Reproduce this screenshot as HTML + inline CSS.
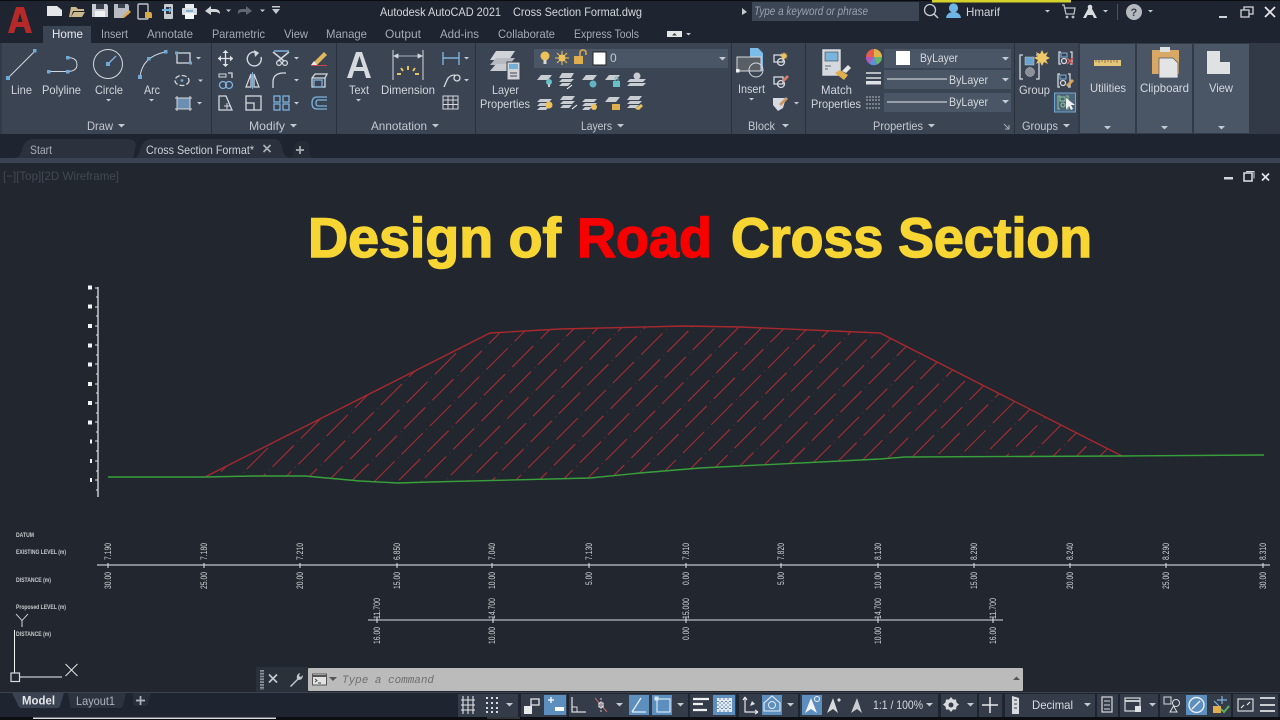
<!DOCTYPE html>
<html><head><meta charset="utf-8"><title>AutoCAD</title>
<style>
html,body{margin:0;padding:0;background:#22272f;width:1280px;height:720px;overflow:hidden}
svg{display:block}
text{font-family:"Liberation Sans",sans-serif;font-size:12px;fill:#d3d7dc}
.tab{fill:#a3abb6;font-size:12px}
.rl{fill:#d2d6db;font-size:12px}
.pt{fill:#c3c8cf;font-size:12px}
.lv{font-size:9px;fill:#d0d3d6}
.lb{font-size:6px;fill:#c8cbcf;font-weight:bold}
.ic{fill:none;stroke:#d5d9de;stroke-width:1.3}
.blue{fill:none;stroke:#7fb2dc;stroke-width:1.3}
</style></head><body>
<svg width="1280" height="720" viewBox="0 0 1280 720" xmlns="http://www.w3.org/2000/svg">
<defs>
<polygon id="d" points="0,0 7,0 3.5,3.5" fill="#c5cad1"/>
<polygon id="e" points="0,0 5,0 2.5,2.5" fill="#c5cad1"/>
<pattern id="h" width="40" height="33" patternUnits="userSpaceOnUse" patternTransform="rotate(-45 205 477)">
<line x1="0" y1="6" x2="30" y2="6" stroke="#b02c30" stroke-width="1.1"/>
<line x1="35" y1="6" x2="36" y2="6" stroke="#6c3038" stroke-width="1"/>
<line x1="20" y1="22.5" x2="40" y2="22.5" stroke="#b02c30" stroke-width="1.1"/>
<line x1="0" y1="22.5" x2="10" y2="22.5" stroke="#b02c30" stroke-width="1.1"/>
<line x1="15" y1="22.5" x2="16" y2="22.5" stroke="#6c3038" stroke-width="1"/>
</pattern>
</defs>

<!-- base -->
<rect width="1280" height="720" fill="#22272f"/>
<rect width="1280" height="43" fill="#1f2530"/>
<rect y="0" width="1280" height="1" fill="#0a0c10"/>
<!-- ribbon -->
<rect x="0" y="43" width="1280" height="91" fill="#323a47"/>
<rect x="2" y="43" width="1076" height="91" fill="#3a4453"/>
<rect x="43" y="26" width="48" height="17" fill="#3a4453"/>
<g fill="#2a313c">
<rect x="211" y="43" width="1" height="91"/><rect x="336" y="43" width="1" height="91"/><rect x="475" y="43" width="1" height="91"/>
<rect x="731" y="43" width="1" height="91"/><rect x="805" y="43" width="1" height="91"/><rect x="1014" y="43" width="1" height="91"/>
</g>
<rect x="1080" y="44" width="55" height="89" fill="#4a5566"/>
<rect x="1137" y="44" width="55" height="89" fill="#4a5566"/>
<rect x="1194" y="44" width="55" height="89" fill="#4a5566"/>

<!-- A logo -->
<path d="M8 33 L16 7 L24 7 L32 33 L26 33 L24 27 L16 27 L14 33 Z M17.500 22 L22.500 22 L20 13 Z" fill="#b52a28" fill-rule="evenodd"/>

<!-- QAT -->
<path d="M47 6h10l5 4v6h-15z" fill="#e4e6e8"/>
<path d="M69 17l2-10h5l2 2h6v2h-11l-2 6z M71 17l3-5h11l-3 5z" fill="#c9b98d"/>
<path d="M92 4h15l1 2v11h-16z" fill="#c8ccd1"/><rect x="96" y="4" width="8" height="5" fill="#39414e"/><rect x="95" y="11" width="10" height="6" fill="#eef0f2"/>
<path d="M114 4h14l1 2v8l-6 4h-9z" fill="#b8bcc2"/><rect x="118" y="4" width="7" height="4" fill="#39414e"/><path d="M122 17l7-7 2 2-7 6z" fill="#e0a84a"/>
<rect x="138" y="4" width="10" height="15" rx="1" fill="none" stroke="#bfc3c9" stroke-width="1.4"/><path d="M145 12h6l1 2v4h-7z" fill="#d9a948"/>
<rect x="164" y="4" width="9" height="15" rx="1" fill="#c7cbd0"/><rect x="166" y="7" width="5" height="7" fill="#2f3744"/><path d="M162 9h7v-2l3 3-3 3v-2h-7z" fill="#6eb6e0"/>
<rect x="185" y="4" width="9" height="5" fill="#e8eaec"/><rect x="182" y="8" width="15" height="7" rx="1" fill="#d7dade"/><rect x="185" y="13" width="9" height="6" fill="#f4f5f6"/><rect x="186" y="10" width="7" height="2" fill="#7eb2d6"/>
<path d="M205 11l6-5v3h4q5 0 5 5q-2-2-5-2h-4v3z" fill="#d2d6db"/>
<use href="#e" x="226" y="9.5"/>
<path d="M252 11l-6-5v3h-4q-5 0-4 5q2-2 4-2h4v3z" fill="#5f6773"/>
<use href="#e" x="260" y="9.5"/>
<rect x="272" y="6" width="8" height="1.5" fill="#c5cad1"/><polygon points="272,9 280,9 276,14" fill="#c5cad1"/>

<text x="380" y="16" textLength="121" lengthAdjust="spacingAndGlyphs">Autodesk AutoCAD 2021</text>
<text x="513" y="16" textLength="129" lengthAdjust="spacingAndGlyphs">Cross Section Format.dwg</text>

<polygon points="742,8 747,12 742,15" fill="#c5cad1"/>
<rect x="752" y="2" width="167" height="19" fill="#3c4655"/>
<text x="754" y="15" textLength="114" lengthAdjust="spacingAndGlyphs" style="font-style:italic;font-size:12px;fill:#98a1ae">Type a keyword or phrase</text>
<circle cx="930" cy="10" r="5.5" fill="none" stroke="#c7cbd0" stroke-width="1.3"/><line x1="934" y1="14" x2="938" y2="18" stroke="#c7cbd0" stroke-width="1.5"/>
<circle cx="953.5" cy="8" r="4.6" fill="#6fb4e6"/><path d="M946 18q1-6 7.500-6t7.500 6z" fill="#6fb4e6"/>
<text x="966" y="16" textLength="34" lengthAdjust="spacingAndGlyphs">Hmarif</text>
<use href="#e" x="1045" y="10"/>
<path d="M1062 5h2l2 9h8l1-6h-10" fill="none" stroke="#b9bec5" stroke-width="1.3"/><circle cx="1067" cy="17" r="1.4" fill="#b9bec5"/><circle cx="1073" cy="17" r="1.4" fill="#b9bec5"/>
<path d="M1083 18l7-13 7 13-3 0-1.500-3h-5l-1.500 3z" fill="#d8dbdf"/><circle cx="1090" cy="7" r="2.300" fill="#d8dbdf"/>
<use href="#e" x="1103" y="10"/>
<rect x="1117" y="4" width="1" height="16" fill="#4b5360"/>
<circle cx="1134" cy="12" r="8" fill="#b5b9bf"/><text x="1130.500" y="16" style="font-size:11px;font-weight:bold;fill:#3a414c">?</text>
<use href="#e" x="1148" y="10"/>
<rect x="932" y="0" width="139" height="2.500" fill="#d6d22c"/>
<rect x="1219" y="16" width="8" height="2" fill="#d0d3d8"/>
<rect x="1244" y="7" width="9" height="7" fill="none" stroke="#d0d3d8" stroke-width="1.300"/><rect x="1241" y="10" width="8" height="7" fill="#1f2530" stroke="#d0d3d8" stroke-width="1.300"/>
<path d="M1265 7l10 10M1275 7l-10 10" stroke="#e2e4e7" stroke-width="1.800"/>

<!-- tabs -->
<text x="52" y="38" textLength="31" lengthAdjust="spacingAndGlyphs" style="fill:#e8eaed">Home</text>
<text class="tab" x="101" y="38" textLength="27" lengthAdjust="spacingAndGlyphs">Insert</text>
<text class="tab" x="147" y="38" textLength="46" lengthAdjust="spacingAndGlyphs">Annotate</text>
<text class="tab" x="212" y="38" textLength="53" lengthAdjust="spacingAndGlyphs">Parametric</text>
<text class="tab" x="284" y="38" textLength="24" lengthAdjust="spacingAndGlyphs">View</text>
<text class="tab" x="326" y="38" textLength="41" lengthAdjust="spacingAndGlyphs">Manage</text>
<text class="tab" x="385" y="38" textLength="36" lengthAdjust="spacingAndGlyphs">Output</text>
<text class="tab" x="440" y="38" textLength="39" lengthAdjust="spacingAndGlyphs">Add-ins</text>
<text class="tab" x="498" y="38" textLength="57" lengthAdjust="spacingAndGlyphs">Collaborate</text>
<text class="tab" x="574" y="38" textLength="65" lengthAdjust="spacingAndGlyphs">Express Tools</text>
<rect x="667" y="31" width="15" height="6" fill="#e4e6e8"/><polygon points="672,35.500 677,35.500 674.500,33" fill="#444"/>
<use href="#e" x="686" y="33"/>

<!-- Draw -->
<line x1="8" y1="78" x2="35" y2="51" stroke="#d5d9de" stroke-width="1"/><rect x="6" y="76" width="4" height="4" fill="#6fa9d6"/><rect x="33" y="49" width="3.500" height="3.500" fill="#6fa9d6"/>
<path d="M48 71.500h19M67 57.500q10 0 10 7t-10 7" fill="none" stroke="#d5d9de" stroke-width="1"/><rect x="47" y="70" width="3.500" height="3.500" fill="#6fa9d6"/><rect x="66" y="70" width="3.500" height="3.500" fill="#6fa9d6"/><rect x="66" y="56" width="3.500" height="3.500" fill="#6fa9d6"/>
<circle cx="108" cy="64" r="14.500" fill="none" stroke="#d5d9de" stroke-width="1"/><line x1="108" y1="64" x2="116" y2="56" stroke="#7fb2dc" stroke-width="1.300"/><rect x="106" y="62" width="4" height="4" fill="#6fa9d6"/>
<path d="M140 77q2-20 25-25" fill="none" stroke="#d5d9de" stroke-width="1"/><rect x="138" y="75" width="4" height="4" fill="#6fa9d6"/><rect x="147" y="57" width="3.500" height="3.500" fill="#6fa9d6"/><rect x="164" y="50" width="3.500" height="3.500" fill="#6fa9d6"/>
<rect x="177" y="53" width="13" height="10" class="ic"/><rect x="175" y="51.500" width="3" height="3" fill="#6fa9d6"/><rect x="189" y="61.500" width="3" height="3" fill="#6fa9d6"/>
<use href="#e" x="196" y="57"/>
<ellipse cx="182" cy="80.500" rx="7" ry="5" class="ic" stroke-dasharray="5 2"/><circle cx="182" cy="80.500" r="1.400" fill="#6fa9d6"/>
<use href="#e" x="198" y="79.500"/>
<rect x="177" y="98" width="13" height="11" fill="#6d8eb3" stroke="#d5d9de" stroke-width="1"/><path d="M175 98h17M175 109h17M177 96v15M190 96v15" stroke="#d5d9de" stroke-width="1"/>
<use href="#e" x="197" y="102"/>
<text class="rl" x="11" y="94" textLength="21" lengthAdjust="spacingAndGlyphs">Line</text>
<text class="rl" x="42" y="94" textLength="39" lengthAdjust="spacingAndGlyphs">Polyline</text>
<text class="rl" x="95" y="94" textLength="28" lengthAdjust="spacingAndGlyphs">Circle</text>
<text class="rl" x="144" y="94" textLength="16" lengthAdjust="spacingAndGlyphs">Arc</text>
<use href="#e" x="106" y="99"/><use href="#e" x="149" y="99"/>
<text class="pt" x="87" y="130" textLength="26" lengthAdjust="spacingAndGlyphs">Draw</text><use href="#d" x="118" y="124"/>

<!-- Modify -->
<path d="M218 58.500h15M225.500 51v15" stroke="#e0e3e6" stroke-width="1.300"/><path d="M225.500 50l-3 3h6zM225.500 67l-3-3h6zM218 58.500l3-3v6zM233 58.500l-3-3v6z" fill="#e0e3e6"/>
<path d="M258 53a7 7 0 1 0 3 4" fill="none" stroke="#d5d9de" stroke-width="1.400"/><path d="M254 50l5 3-4 4z" fill="#d5d9de"/>
<path d="M273 52l11 9M289 52l-11 9" stroke="#d5d9de" stroke-width="1.500"/><path d="M274 51h15" stroke="#7fb2dc" stroke-width="1.500"/><circle cx="279" cy="63" r="2.400" class="ic"/><circle cx="285" cy="63" r="2.400" class="ic"/>
<use href="#e" x="294" y="57"/>
<path d="M312 64l12-12 3 3-10 10z" fill="#e2b85f"/><path d="M311 65h6l-3-4z" fill="#e8e8e8"/><rect x="311" y="65" width="16" height="1" fill="#c44"/>
<rect x="219" y="74" width="7" height="3" fill="none" stroke="#d5d9de"/><path d="M228 73h4v5" class="ic"/><circle cx="223" cy="85" r="3.500" class="blue"/><circle cx="229" cy="85" r="3.500" class="blue"/>
<path d="M246 87l5-13v13zM254 87v-13l5 13z" fill="none" stroke="#d5d9de" stroke-width="1.200"/><line x1="252.500" y1="72" x2="252.500" y2="89" stroke="#7fb2dc"/>
<path d="M273 88v-6q0-8 9-9h4" class="ic"/><use href="#e" x="294" y="79"/>
<path d="M312 78h13l2-4h-12l-3 4v9h13v-9" class="ic"/><rect x="314" y="80" width="8" height="7" class="blue"/>
<path d="M219 96h7l6 14h-13z" class="ic"/><path d="M224 106h6M227 103v6" stroke="#d5d9de"/>
<rect x="246" y="96" width="15" height="14" class="ic"/><path d="M246 103h8v7" class="ic"/>
<rect x="274" y="96" width="6" height="6" class="blue"/><rect x="283" y="96" width="6" height="6" class="blue"/><rect x="274" y="104" width="6" height="6" class="blue"/><rect x="283" y="104" width="6" height="6" class="blue"/>
<use href="#e" x="294" y="102"/>
<path d="M327 97h-10q-5 0-5 6t5 6h10M327 100h-9q-2 0-2 3t2 3h9" class="blue"/>
<text class="pt" x="249" y="130" textLength="36" lengthAdjust="spacingAndGlyphs">Modify</text><use href="#d" x="290" y="124"/>

<!-- Annotation -->
<path d="M347 78l9-26h6l9 26h-5l-2-7h-10l-2 7zM356 67h7l-3.500-11z" fill="#d6d9dd" fill-rule="evenodd"/>
<path d="M393 50v30M423 50v30" stroke="#d5d9de"/><path d="M394 56h28M394 56l4-2v4zM422 56l-4-2v4z" fill="#d5d9de" stroke="#d5d9de" stroke-width=".8"/>
<path d="M408 66v4M401 68l2 3M415 68l-2 3M397 74h4M415 74h4" stroke="#e5c25e" stroke-width="2"/>
<text class="rl" x="349" y="94" textLength="20" lengthAdjust="spacingAndGlyphs">Text</text>
<text class="rl" x="381" y="94" textLength="54" lengthAdjust="spacingAndGlyphs">Dimension</text>
<use href="#e" x="356" y="99"/>
<path d="M443 52v13M459 52v13M443 58h16" stroke="#7fb2dc" stroke-width="1.400" fill="none"/><use href="#e" x="464" y="57"/>
<path d="M444 87l3-7q2-5 8-5" class="ic"/><circle cx="457" cy="78" r="3" class="ic"/><use href="#e" x="464" y="79"/>
<rect x="443" y="96" width="15" height="13" fill="#39414e" stroke="#d5d9de"/><path d="M443 100h15M443 104.500h15M448 96v13M453 96v13" stroke="#d5d9de"/>
<text class="pt" x="371" y="130" textLength="56" lengthAdjust="spacingAndGlyphs">Annotation</text><use href="#d" x="432" y="124"/>

<!-- Layers -->
<path d="M490 60l6-9h19l-6 9z" fill="#d0d3d7"/><path d="M490 65l6-7h19l-6 7z" fill="#b7bbc0"/><path d="M490 71l6-7h19l-6 7z" fill="#c8cbcf"/>
<rect x="507" y="62" width="13" height="18" fill="#cfd2d6" stroke="#39414e"/><rect x="509" y="64" width="9" height="5" fill="#74aed6"/><path d="M510 73h7M510 76h7" stroke="#445"/>
<text class="rl" x="492" y="94" textLength="27" lengthAdjust="spacingAndGlyphs">Layer</text>
<text class="rl" x="480" y="108" textLength="50" lengthAdjust="spacingAndGlyphs">Properties</text>
<rect x="534" y="49" width="194" height="19" fill="#4a5566"/>
<circle cx="545" cy="56" r="4.500" fill="#eec25b"/><rect x="543.500" y="60" width="3" height="4" fill="#d8d8d8"/>
<circle cx="562" cy="58" r="3.500" fill="#eec25b"/><path d="M562 51v14M555 58h14M557 53l10 10M567 53l-10 10" stroke="#eec25b"/>
<rect x="574" y="56" width="9" height="8" fill="#e0ae4f"/><path d="M580 56v-3q0-3 3-3t3 3v2" fill="none" stroke="#e0ae4f" stroke-width="1.500"/>
<rect x="593" y="52" width="13" height="13" fill="#fff" stroke="#222"/>
<text x="610" y="62" style="fill:#c5cad1">0</text>
<use href="#d" x="719" y="57"/>
<g fill="#c9ccd0">
<path d="M537 80l4-5h11l-4 5z"/><path d="M559 78l3-5h12l-3 5zM559 82l3-3h12l-3 3zM559 86l3-3h9l-3 3z"/>
<path d="M582 80l4-5h11l-4 5z"/><path d="M605 80l4-5h11l-4 5z"/><path d="M627 82l3-3h16l-3 3zM627 86l3-3h16l-3 3z"/><circle cx="637" cy="76" r="3.500"/>
<path d="M537 102l3-3h12l-3 3zM537 106l3-3h12l-3 3zM537 110l3-3h9l-3 3z"/><path d="M560 100l3-4h12l-3 4zM560 104l3-3h12l-3 3zM560 108l3-3h9l-3 3z"/>
<path d="M582 102l3-3h12l-3 3zM582 106l3-3h12l-3 3zM582 110l3-3h7l-3 3z"/><path d="M605 102l4-5h11l-4 5z"/><path d="M627 100l3-4h12l-3 4zM627 104l3-3h12l-3 3zM627 108l3-3h9l-3 3z"/>
</g>
<circle cx="549" cy="82" r="3" fill="#66c2c6"/><rect x="548" y="84" width="2" height="3" fill="#ccc"/><path d="M572 85l-5 4" stroke="#fff"/><circle cx="593" cy="84" r="3.500" fill="#62b4c2"/><rect x="613" y="81" width="7" height="6" fill="#66c2c6"/><path d="M615 81v-2q0-2 1.500-2t1.500 2v2" stroke="#66c2c6" fill="none"/>
<circle cx="549" cy="105" r="3.500" fill="#eec25b"/><path d="M572 109l5-4" stroke="#fff"/><circle cx="594" cy="107" r="3" fill="#eec25b"/><rect x="612" y="104" width="8" height="6" fill="#e0ae4f"/><path d="M635 109l6-5 2 2-4 4z" fill="#e5c25e"/>
<text class="pt" x="581" y="130" textLength="31" lengthAdjust="spacingAndGlyphs">Layers</text><use href="#d" x="617" y="124"/>

<!-- Block -->
<path d="M750 48h8l5 5v18h-13z" fill="#7dbbe8"/><rect x="737" y="57" width="24" height="14" fill="#5a5f67" stroke="#d5d9de"/><circle cx="756" cy="70" r="7" fill="none" stroke="#d5d9de" stroke-width="1"/><rect x="736" y="69" width="3.500" height="3.500" fill="#eee"/>
<text class="rl" x="738" y="93" textLength="27" lengthAdjust="spacingAndGlyphs">Insert</text>
<use href="#e" x="749" y="98"/>
<rect x="774" y="55" width="9" height="7" class="ic"/><circle cx="781" cy="62" r="3.500" class="ic"/><path d="M784 52l1 2 2-1-1 2 2 1-2 1 1 2-2-1-1 2-1-2-2 1 1-2-2-1 2-1-1-2 2 1z" fill="#eec25b"/>
<rect x="774" y="77" width="9" height="7" class="ic"/><circle cx="781" cy="84" r="3.500" class="ic"/><path d="M782 80l5-5 2 2-5 5z" fill="#d77a6a"/>
<path d="M773 98h13l-3 10-5 3-5-6z" fill="#d8dbdf"/><path d="M779 104l7-7 2 2-7 7z" fill="#c96"/>
<use href="#e" x="794" y="102"/>
<text class="pt" x="748" y="130" textLength="27" lengthAdjust="spacingAndGlyphs">Block</text><use href="#d" x="782" y="124"/>

<!-- Match props -->
<rect x="822" y="49" width="19" height="27" fill="#d5d8dc" stroke="#39414e" stroke-width=".5"/><rect x="825" y="52" width="13" height="9" fill="#7ab4dc" stroke="#39414e" stroke-width=".6"/><path d="M825 66h6M825 69h3" stroke="#666"/>
<path d="M835 73l5-3 8 5-4 5z" fill="#e0ae4f"/><path d="M842 71l6-6 3 3-5 5z" fill="#e6e6e6"/>
<text class="rl" x="821" y="94" textLength="31" lengthAdjust="spacingAndGlyphs">Match</text>
<text class="rl" x="811" y="108" textLength="50" lengthAdjust="spacingAndGlyphs">Properties</text>
<circle cx="874" cy="57" r="8" fill="#e35d4f"/><path d="M874 57V49a8 8 0 0 1 8 8z" fill="#e0b34a"/><path d="M874 57h8a8 8 0 0 1-5 7.500z" fill="#62b56b"/><path d="M874 57l3 7.500a8 8 0 0 1-8-1z" fill="#5c8fd6"/><path d="M874 57l-5 6.500a8 8 0 0 1-3-6.500z" fill="#b058c0"/>
<path d="M866 73h15M866 78h15" stroke="#dfe1e4" stroke-width="1.500"/><rect x="866" y="81" width="15" height="3.500" fill="#dfe1e4"/>
<path d="M866 97h15M866 100h15M866 104h15M866 108h15" stroke="#b7bbc1" stroke-dasharray="2 1"/>
<rect x="884" y="49" width="127" height="19" fill="#4a5566"/><rect x="884" y="70" width="127" height="19" fill="#4a5566"/><rect x="884" y="93" width="127" height="19" fill="#4a5566"/>
<rect x="896" y="51" width="14" height="14" fill="#fff"/>
<text x="920" y="62" textLength="38" lengthAdjust="spacingAndGlyphs" style="fill:#d6d9dd">ByLayer</text>
<line x1="887" y1="79" x2="947" y2="79" stroke="#e7e9eb"/><text x="949" y="84" textLength="39" lengthAdjust="spacingAndGlyphs" style="fill:#d6d9dd">ByLayer</text>
<line x1="887" y1="102" x2="947" y2="102" stroke="#e7e9eb"/><text x="949" y="106" textLength="39" lengthAdjust="spacingAndGlyphs" style="fill:#d6d9dd">ByLayer</text>
<use href="#d" x="1002" y="57"/><use href="#d" x="1002" y="78"/><use href="#d" x="1002" y="100"/>
<text class="pt" x="873" y="130" textLength="50" lengthAdjust="spacingAndGlyphs">Properties</text><use href="#d" x="928" y="124"/>
<path d="M1004 124l5 5M1009 125v4h-4" stroke="#a8aeb6" fill="none"/>

<!-- Groups -->
<path d="M1023 55h-3v24h3M1036 55h3v24h-3" class="ic"/><rect x="1025" y="57" width="9" height="8" fill="#6aa3cf" stroke="#ccc" stroke-width=".5"/><circle cx="1030" cy="72" r="4.500" fill="#8b9098" stroke="#ccc" stroke-width=".5"/>
<path d="M1042 50l2 4 4-2-2 4 4 2-4 2 2 4-4-2-2 4-2-4-4 2 2-4-4-2 4-2-2-4 4 2z" fill="#efc868"/>
<text class="rl" x="1019" y="94" textLength="31" lengthAdjust="spacingAndGlyphs">Group</text>
<path d="M1061 52h-2v12h2M1070 52h2v12h-2" class="ic"/><rect x="1061" y="53" width="6" height="4" fill="none" stroke="#7fb2dc"/><circle cx="1064" cy="61" r="2.500" class="ic"/><path d="M1067 58l6 6M1073 58l-6 6" stroke="#d25a5a" stroke-width="1.500"/>
<path d="M1060 74h-2v13h2M1068 74h2v13h-2" class="ic"/><rect x="1060" y="75" width="6" height="4" fill="none" stroke="#7fb2dc"/><circle cx="1063" cy="83" r="2.500" class="ic"/><path d="M1066 85l6-6 2 2-6 6z" fill="#d9a45e"/>
<rect x="1054.500" y="93" width="21" height="19" fill="#4e6478" stroke="#6fa6cf"/><path d="M1060 96h-2v13h2M1066 96h2v13h-2" stroke="#8fc79a" fill="none"/><rect x="1060" y="97" width="5" height="4" fill="none" stroke="#8fc79a"/><circle cx="1063" cy="105" r="2" fill="none" stroke="#8fc79a"/><path d="M1066 98v11l3-3 2 4 2-1-2-4h4z" fill="#f2f2f2"/>
<text class="pt" x="1022" y="130" textLength="36" lengthAdjust="spacingAndGlyphs">Groups</text><use href="#d" x="1063" y="124"/>

<!-- collapsed -->
<rect x="1094" y="60" width="27" height="6" fill="#e4c67a"/><path d="M1096 60v2M1099 60v3M1102 60v2M1105 60v3M1108 60v2M1111 60v3M1114 60v2M1117 60v3" stroke="#887344"/>
<text x="1090" y="92" textLength="36" lengthAdjust="spacingAndGlyphs" style="fill:#d4d8dd">Utilities</text><use href="#d" x="1104" y="126"/>
<rect x="1152" y="50" width="27" height="24" fill="#d9a865"/><rect x="1160" y="47" width="10" height="5" fill="#dedfe1"/>
<path d="M1159 58h14l5 5v15h-19z" fill="#e3e4e6" stroke="#4a5566" stroke-width=".7"/>
<text x="1140" y="92" textLength="49" lengthAdjust="spacingAndGlyphs" style="fill:#d4d8dd">Clipboard</text><use href="#d" x="1161" y="126"/>
<path d="M1207 51h13v11h10v12h-23z" fill="#e0e1e3"/>
<text x="1209" y="92" textLength="24" lengthAdjust="spacingAndGlyphs" style="fill:#d4d8dd">View</text><use href="#d" x="1218" y="126"/>

<!-- file tabs -->
<rect x="0" y="134" width="1280" height="24" fill="#1f2530"/>
<path d="M14 158q6 0 8-8q2-11 12-11h94q7 0 8 6l-3 13z" fill="#2b323d"/>
<path d="M135 158q3 0 5-8q3-11 12-11h122q6 0 8 8 1 10 8 11z" fill="#2b323d"/>
<path d="M290 158q3 0 4-8t6-9h7q2 0 2 6t3 11z" fill="#262c36"/>
<text x="30" y="154" textLength="22" lengthAdjust="spacingAndGlyphs" style="fill:#a7aeb8">Start</text>
<text x="146" y="154" textLength="108" lengthAdjust="spacingAndGlyphs" style="fill:#ccd0d6">Cross Section Format*</text>
<path d="M263.500 145l7 7M270.500 145l-7 7" stroke="#a8aeb6" stroke-width="1.700"/>
<path d="M300 146v8M296 150h8" stroke="#a8aeb6" stroke-width="1.700"/>
<rect x="0" y="158" width="1280" height="5" fill="#3a4351"/>

<!-- viewport label -->
<text x="3" y="180" textLength="116" lengthAdjust="spacingAndGlyphs" style="fill:#424953;font-size:12px">[−][Top][2D Wireframe]</text>
<rect x="1224" y="177" width="9" height="2.500" fill="#d3d6da"/>
<rect x="1244" y="173" width="8" height="8" fill="none" stroke="#d3d6da" stroke-width="1.600"/><path d="M1246 171.500h8v7" stroke="#d3d6da" fill="none"/>
<path d="M1262 173.500l7 7M1269 173.500l-7 7" stroke="#e2e4e7" stroke-width="1.700"/>

<!-- title -->
<text x="308" y="257" textLength="253" lengthAdjust="spacingAndGlyphs" style="font-size:56px;font-weight:bold;fill:#f7d533;stroke:#f7d533;stroke-width:1.500">Design of</text>
<text x="577" y="257" textLength="135" lengthAdjust="spacingAndGlyphs" style="font-size:56px;font-weight:bold;fill:#f80000;stroke:#f80000;stroke-width:1.500">Road</text>
<text x="731" y="257" textLength="361" lengthAdjust="spacingAndGlyphs" style="font-size:56px;font-weight:bold;fill:#f7d533;stroke:#f7d533;stroke-width:1.500">Cross Section</text>

<!-- drawing -->
<path d="M205 477L490 333 560 329 685 326 740 327 880 333 1122 456 905 457 880 459 700 468 640 473 590 478 430 482 398 483 360 481 305 476 253 476Z" fill="url(#h)"/>
<polyline points="205,477 490,333 560,329 685,326 740,327 880,333 1122,456" fill="none" stroke="#a8282e" stroke-width="1.400"/>
<polyline points="108,477 205,477 253,476 305,476 360,481 398,483 430,482 590,478 640,473 700,468 880,459 905,457 1122,456 1264,455" fill="none" stroke="#38a03a" stroke-width="1.400"/>

<!-- scale -->
<line x1="98" y1="287" x2="98" y2="497" stroke="#dfe1e3" stroke-width="1.300"/>
<path d="M95 288h3M96 297h2M95 307h3M96 316h2M95 326h3M96 335h2M95 345h3M96 355h2M95 364h3M96 374h2M95 384h3M96 393h2M95 403h3M96 413h2M95 422h3M96 432h2M95 441h3M96 451h2M95 461h3M96 471h2M95 480h3M96 490h2" stroke="#dfe1e3"/>
<g fill="#f4f5f6">
<rect x="88" y="285.500" width="4" height="4"/><rect x="88" y="304.500" width="4" height="4"/><rect x="88" y="324" width="4" height="4"/><rect x="88" y="343.500" width="4" height="4"/><rect x="88" y="362.500" width="4" height="4"/><rect x="88" y="382" width="4" height="4"/><rect x="88" y="401" width="4" height="4"/><rect x="88" y="420.500" width="4" height="4"/>
<rect x="90" y="439.500" width="2" height="4"/><rect x="90" y="459" width="2" height="4"/><rect x="90" y="478" width="2" height="4"/>
</g>

<!-- table lines -->
<line x1="97" y1="565" x2="1270" y2="565" stroke="#c3c5c8" stroke-width="1.300"/>
<line x1="368" y1="620" x2="1003" y2="620" stroke="#dcdee0" stroke-width="1"/>
<path d="M108 563v5M204 563v5M300 563v5M397 563v5M492 563v5M589 563v5M686 563v5M781 563v5M878 563v5M974 563v5M1070 563v5M1166 563v5M1263 563v5" stroke="#e6e7e9"/>
<path d="M377 617v6M493 617v6M686 617v6M878 617v6M993 617v6" stroke="#e6e7e9"/>

<text class="lb" x="16" y="537" textLength="18" lengthAdjust="spacingAndGlyphs">DATUM</text>
<text class="lb" x="16" y="554" textLength="50" lengthAdjust="spacingAndGlyphs">EXISTING LEVEL (m)</text>
<text class="lb" x="16" y="582" textLength="35" lengthAdjust="spacingAndGlyphs">DISTANCE (m)</text>
<text class="lb" x="16" y="609" textLength="50" lengthAdjust="spacingAndGlyphs">Proposed LEVEL (m)</text>
<text class="lb" x="16" y="636" textLength="35" lengthAdjust="spacingAndGlyphs">DISTANCE (m)</text>

<text class="lv" transform="translate(111 560) rotate(-90)" textLength="17" lengthAdjust="spacingAndGlyphs">7.190</text>
<text class="lv" transform="translate(207 560) rotate(-90)" textLength="17" lengthAdjust="spacingAndGlyphs">7.180</text>
<text class="lv" transform="translate(303 560) rotate(-90)" textLength="17" lengthAdjust="spacingAndGlyphs">7.210</text>
<text class="lv" transform="translate(400 560) rotate(-90)" textLength="17" lengthAdjust="spacingAndGlyphs">6.850</text>
<text class="lv" transform="translate(495 560) rotate(-90)" textLength="17" lengthAdjust="spacingAndGlyphs">7.040</text>
<text class="lv" transform="translate(592 560) rotate(-90)" textLength="17" lengthAdjust="spacingAndGlyphs">7.130</text>
<text class="lv" transform="translate(689 560) rotate(-90)" textLength="17" lengthAdjust="spacingAndGlyphs">7.810</text>
<text class="lv" transform="translate(784 560) rotate(-90)" textLength="17" lengthAdjust="spacingAndGlyphs">7.820</text>
<text class="lv" transform="translate(881 560) rotate(-90)" textLength="17" lengthAdjust="spacingAndGlyphs">8.130</text>
<text class="lv" transform="translate(977 560) rotate(-90)" textLength="17" lengthAdjust="spacingAndGlyphs">8.290</text>
<text class="lv" transform="translate(1073 560) rotate(-90)" textLength="17" lengthAdjust="spacingAndGlyphs">8.240</text>
<text class="lv" transform="translate(1169 560) rotate(-90)" textLength="17" lengthAdjust="spacingAndGlyphs">8.290</text>
<text class="lv" transform="translate(1266 560) rotate(-90)" textLength="17" lengthAdjust="spacingAndGlyphs">8.310</text>

<text class="lv" transform="translate(111 589) rotate(-90)" textLength="17" lengthAdjust="spacingAndGlyphs">30.00</text>
<text class="lv" transform="translate(207 589) rotate(-90)" textLength="17" lengthAdjust="spacingAndGlyphs">25.00</text>
<text class="lv" transform="translate(303 589) rotate(-90)" textLength="17" lengthAdjust="spacingAndGlyphs">20.00</text>
<text class="lv" transform="translate(400 589) rotate(-90)" textLength="17" lengthAdjust="spacingAndGlyphs">15.00</text>
<text class="lv" transform="translate(495 589) rotate(-90)" textLength="17" lengthAdjust="spacingAndGlyphs">10.00</text>
<text class="lv" transform="translate(592 585) rotate(-90)" textLength="13" lengthAdjust="spacingAndGlyphs">5.00</text>
<text class="lv" transform="translate(689 585) rotate(-90)" textLength="13" lengthAdjust="spacingAndGlyphs">0.00</text>
<text class="lv" transform="translate(784 585) rotate(-90)" textLength="13" lengthAdjust="spacingAndGlyphs">5.00</text>
<text class="lv" transform="translate(881 589) rotate(-90)" textLength="17" lengthAdjust="spacingAndGlyphs">10.00</text>
<text class="lv" transform="translate(977 589) rotate(-90)" textLength="17" lengthAdjust="spacingAndGlyphs">15.00</text>
<text class="lv" transform="translate(1073 589) rotate(-90)" textLength="17" lengthAdjust="spacingAndGlyphs">20.00</text>
<text class="lv" transform="translate(1169 589) rotate(-90)" textLength="17" lengthAdjust="spacingAndGlyphs">25.00</text>
<text class="lv" transform="translate(1266 589) rotate(-90)" textLength="17" lengthAdjust="spacingAndGlyphs">30.00</text>

<text class="lv" transform="translate(380 619) rotate(-90)" textLength="21" lengthAdjust="spacingAndGlyphs">11.700</text>
<text class="lv" transform="translate(495 619) rotate(-90)" textLength="21" lengthAdjust="spacingAndGlyphs">14.700</text>
<text class="lv" transform="translate(689 619) rotate(-90)" textLength="21" lengthAdjust="spacingAndGlyphs">15.000</text>
<text class="lv" transform="translate(881 619) rotate(-90)" textLength="21" lengthAdjust="spacingAndGlyphs">14.700</text>
<text class="lv" transform="translate(996 619) rotate(-90)" textLength="21" lengthAdjust="spacingAndGlyphs">11.700</text>

<text class="lv" transform="translate(380 644) rotate(-90)" textLength="17" lengthAdjust="spacingAndGlyphs">16.00</text>
<text class="lv" transform="translate(495 644) rotate(-90)" textLength="17" lengthAdjust="spacingAndGlyphs">10.00</text>
<text class="lv" transform="translate(689 640) rotate(-90)" textLength="13" lengthAdjust="spacingAndGlyphs">0.00</text>
<text class="lv" transform="translate(881 644) rotate(-90)" textLength="17" lengthAdjust="spacingAndGlyphs">10.00</text>
<text class="lv" transform="translate(996 644) rotate(-90)" textLength="17" lengthAdjust="spacingAndGlyphs">16.00</text>

<!-- UCS -->
<path d="M14.500 630v43M20 677h42" stroke="#f2f3f4" stroke-width="1"/>
<rect x="11" y="673" width="8.500" height="8.500" fill="none" stroke="#d8dadc" stroke-width="1.200"/>
<path d="M65.500 664l12 12M77.500 664l-12 12" stroke="#e8eaec" stroke-width=".9"/>
<path d="M16 614l6 6.500 6-6.500M22 620.500v6.500" fill="none" stroke="#e8eaec" stroke-width=".9"/>

<!-- command line -->
<rect x="256" y="667" width="52" height="25" fill="#2b313b"/>
<path d="M262 670v20" stroke="#8b919a" stroke-width="4" stroke-dasharray="1.800 1"/>
<path d="M269 674.500l8 8M277 674.500l-8 8" stroke="#c3c7cc" stroke-width="1.700"/>
<path d="M290 686l7-7q-1-5 3-6l-1 3 2 1 2-2q0 5-5 5l-7 7z" fill="#c3c7cc"/>
<rect x="308" y="668" width="715" height="23" rx="1" fill="#bbbbbb"/>
<rect x="312.500" y="674" width="14" height="11" fill="#e2e2e2" stroke="#555"/><path d="M312.500 676h14" stroke="#555" stroke-width="2"/><path d="M315 679l2 1.500-2 1.500M318 683h3" stroke="#444" fill="none"/>
<polygon points="329,677 337,677 333,681" fill="#555"/>
<text x="342" y="683" textLength="92" lengthAdjust="spacingAndGlyphs" style="font-family:'Liberation Mono',monospace;font-style:italic;font-size:11px;fill:#6f6f6f">Type a command</text>
<polygon points="1013,680 1020,680 1016.500,676.500" fill="#555"/>

<!-- status bar -->
<rect x="0" y="692" width="1280" height="26" fill="#1f2530"/>
<rect x="0" y="692" width="1280" height="1" fill="#3b424e"/>
<path d="M12 693h52l-4 13q-1 2-3 2H22q-3 0-4-3z" fill="#3a4351"/>
<path d="M68 693h58l-3 13q-1 2-3 2H72q-2 0-2-3z" fill="#2d343f"/>
<path d="M133 693h18l-3 11q-1 2-3 2h-9q-3-1-3-3z" fill="#2a303b"/>
<text x="22" y="704.500" textLength="33" lengthAdjust="spacingAndGlyphs" style="font-weight:bold;fill:#e4e6e9">Model</text>
<text x="76" y="705" textLength="39" lengthAdjust="spacingAndGlyphs" style="fill:#aeb4bd">Layout1</text>
<path d="M140.500 696v9M136 700.500h9" stroke="#aeb4bd" stroke-width="1.700"/>

<rect x="458" y="694" width="820" height="23" fill="#343c49"/>
<g fill="#1f2530"><rect x="518" y="693" width="3" height="25"/><rect x="567" y="693" width="2" height="25"/><rect x="688" y="693" width="2" height="25"/><rect x="736" y="693" width="3" height="25"/><rect x="798" y="693" width="2" height="25"/><rect x="938" y="693" width="3" height="25"/><rect x="977" y="693" width="2" height="25"/><rect x="1002" y="693" width="3" height="25"/><rect x="1095" y="693" width="2" height="25"/><rect x="1118" y="693" width="2" height="25"/><rect x="1158" y="693" width="2" height="25"/><rect x="1231" y="693" width="2" height="25"/></g>
<g fill="#5d8fbe">
<rect x="544" y="695" width="22" height="20"/><rect x="629" y="695" width="20" height="20"/><rect x="652" y="695" width="20" height="20"/><rect x="713" y="695" width="22" height="20"/><rect x="762" y="695" width="20" height="20"/><rect x="802" y="695" width="20" height="20"/><rect x="1186" y="695" width="21" height="20"/>
</g>
<path d="M463 696v18M468 696v18M473 696v18M461 700h14M461 705h14M461 710h14" stroke="#e2e4e7" stroke-width="1.100"/>
<path d="M486 698h13M486 703h13M486 708h13M486 712h13" stroke="#d8dadd" stroke-width="2" stroke-dasharray="2 3"/>
<use href="#d" x="506" y="703"/>
<rect x="524" y="706" width="8" height="8" fill="#e8e9eb"/><path d="M531 706v-7h8v6h-8" fill="none" stroke="#e8e9eb" stroke-width="1.300"/>
<path d="M548 700h6M551 697v6" stroke="#fff" stroke-width="1.300"/><rect x="555" y="707" width="9" height="4" fill="#fff"/>
<path d="M572 697v15h14" fill="none" stroke="#d8dadd" stroke-width="1.300"/><path d="M572 707h5v5" fill="none" stroke="#d8dadd"/>
<path d="M595 698l12 14" stroke="#c46a6a"/><path d="M601 698v14" stroke="#c9ccd0" stroke-dasharray="2 1"/><rect x="599" y="703" width="4" height="4" fill="none" stroke="#fff"/>
<use href="#d" x="616" y="703"/>
<path d="M632 712l9-14M632 712h14" fill="none" stroke="#e6eef5" stroke-width="1.300"/>
<rect x="657" y="699" width="13" height="13" fill="none" stroke="#d6e6f3" stroke-width="1.200"/><rect x="654.500" y="696.500" width="4" height="4" fill="#d6e6f3"/>
<use href="#d" x="677" y="703"/>
<path d="M693 699h16M693 704h10M693 710h14" stroke="#eef0f2" stroke-width="2.300"/>
<rect x="717" y="698" width="15" height="14" fill="#e6e9ec"/><path d="M720 698v14M724 698v14M728 698v14M717 701.500h15M717 705h15M717 708.500h15" stroke="#5d8fbe" stroke-dasharray="2 2"/>
<path d="M745 697v15h13M745 697l-2 3M745 697l2 3M758 712l-3-2M758 712l-3 2" fill="none" stroke="#e2e4e7" stroke-width="1.200"/><path d="M750 706l2-5 3 3z" fill="#e2e4e7"/>
<path d="M772 696l8 7v8h-16v-8z" fill="none" stroke="#e4ecf3" stroke-width="1.100"/><circle cx="772" cy="705" r="3.500" fill="none" stroke="#e4ecf3"/>
<use href="#d" x="787" y="703"/>
<path d="M805 713l6-15 6 15-6-4z" fill="#f0f2f4"/><circle cx="817" cy="699" r="2.500" fill="none" stroke="#f0f2f4"/>
<path d="M827 713l6-15 5 15-5-4z" fill="#d8dadd"/><path d="M839 698l2 2-2 2-2-2z" fill="#d8dadd"/>
<path d="M851 713l6-15 5 15-5-4z" fill="#c9ccd0"/>
<text x="873" y="709" textLength="50" lengthAdjust="spacingAndGlyphs" style="fill:#d7dade">1:1 / 100%</text>
<use href="#d" x="926" y="703"/>
<path d="M951 697l2 2.500h3l.5 3 2.500 2-2.500 2-.5 3h-3l-2 2.500-2-2.500h-3l-.5-3-2.500-2 2.500-2 .5-3h3z" fill="#d8dadd"/><circle cx="951" cy="705" r="2.500" fill="#343c49"/>
<use href="#d" x="967" y="703"/>
<path d="M990 697v16M982 705h16" stroke="#e6e8ea" stroke-width="1.500"/>
<path d="M1012 696l7 2v16h-7z" fill="#d7dade"/><path d="M1014 700h3M1014 704h3M1014 708h3" stroke="#343c49"/>
<text x="1032" y="709" textLength="41" lengthAdjust="spacingAndGlyphs" style="fill:#d7dade">Decimal</text>
<use href="#d" x="1084" y="703"/>
<rect x="1102" y="697" width="10" height="15" fill="none" stroke="#d8dadd" stroke-width="1.200"/><path d="M1104 701h6M1104 705h6M1104 709h6" stroke="#d8dadd"/>
<rect x="1125" y="698" width="15" height="13" fill="none" stroke="#d8dadd" stroke-width="1.200"/><path d="M1125 701h15" stroke="#d8dadd" stroke-width="1.800"/><rect x="1135" y="706" width="6" height="6" fill="#e0e2e5"/>
<use href="#d" x="1149" y="703"/>
<rect x="1164" y="697" width="7" height="7" fill="none" stroke="#d8dadd"/><circle cx="1176" cy="703" r="3.500" fill="none" stroke="#d8dadd"/><path d="M1170 712l3.500-6 3.500 6z" fill="none" stroke="#d8dadd"/>
<circle cx="1196.500" cy="705" r="7.500" fill="none" stroke="#e8edf2" stroke-width="1.400"/><path d="M1192 709l8-8" stroke="#e8edf2" stroke-width="1.500"/>
<path d="M1217 700h10M1222 696v8M1214 701l5 5" stroke="#7fb2dc" stroke-width="1.200" fill="none"/><rect x="1213" y="706" width="8" height="7" fill="#e0ae4f"/><path d="M1221 709l3 3 5-6" fill="none" stroke="#5dac62" stroke-width="2"/>
<rect x="1238" y="699" width="15" height="12" fill="none" stroke="#d8dadd" stroke-width="1.200"/><path d="M1241 708l3-3M1250 702l-3 3" stroke="#e8e9eb" stroke-width="1.200"/>
<path d="M1260 698h15M1260 705h15M1260 711h15" stroke="#e0e2e5" stroke-width="1.700"/>

<!-- bottom -->
<rect x="0" y="717" width="1280" height="3" fill="#0c0e12"/>
<rect x="33" y="717.500" width="243" height="1.500" fill="#d8dadc"/>
<rect x="487" y="717.500" width="33" height="1" fill="#555"/>
</svg>
</body></html>
